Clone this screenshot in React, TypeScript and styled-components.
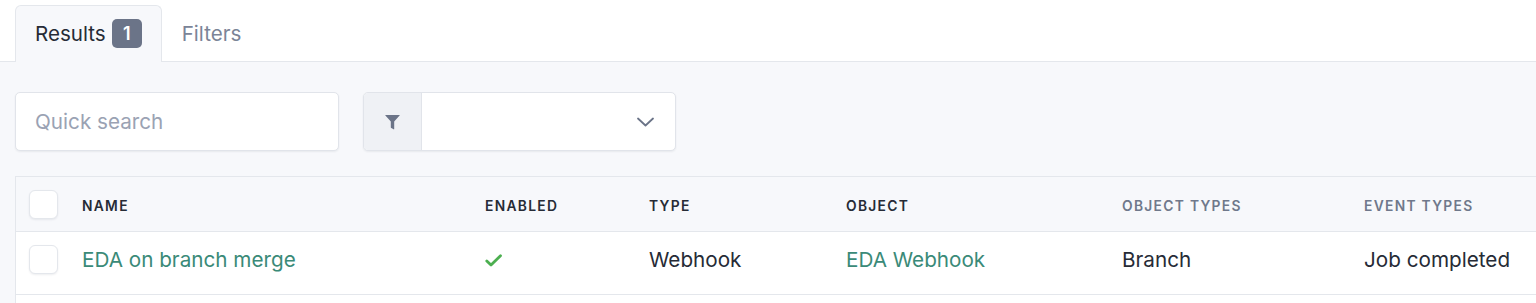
import React from "react";
import styled, { createGlobalStyle } from "styled-components";

const Global = createGlobalStyle`
  html, body { margin: 0; padding: 0; background: #f7f8fb; overflow: hidden; }
  body { font-family: Inter, "Noto Sans", "Liberation Sans", sans-serif; color: #1f2430; }
  * { box-sizing: border-box; }
`;

const Page = styled.div`
  width: 1536px;
  height: 303px;
  background: #f7f8fb;
`;

const TabBar = styled.div`
  display: flex;
  align-items: flex-end;
  height: 62px;
  padding: 5px 15px 0;
  background: #ffffff;
  border-bottom: 1px solid #e4e7ec;
`;

const Tab = styled.div<{ $active?: boolean }>`
  display: flex;
  align-items: center;
  gap: 6px;
  height: 57px;
  margin-bottom: -1px;
  padding: 0 19px 1px 19px;
  font-size: 20.6px;
  color: ${(p) => (p.$active ? "#262b36" : "#7b8497")};
  background: ${(p) => (p.$active ? "#f7f8fb" : "transparent")};
  border: 1px solid ${(p) => (p.$active ? "#e4e7ec" : "transparent")};
  border-bottom: none;
  border-radius: 6px 6px 0 0;
`;

const Badge = styled.span`
  display: inline-flex;
  align-items: center;
  justify-content: center;
  width: 30px;
  height: 29px;
  border-radius: 5px;
  background: #6b7488;
  color: #ffffff;
  font-size: 18px;
  font-weight: 600;
`;

const Toolbar = styled.div`
  display: flex;
  gap: 24px;
  padding: 30px 15px 0;
`;

const SearchBox = styled.div`
  display: flex;
  align-items: center;
  width: 324px;
  height: 59px;
  padding: 0 19px;
  background: #ffffff;
  border: 1px solid #e1e4ea;
  border-radius: 5px;
  box-shadow: 0 1px 2px rgba(30, 40, 60, 0.07);
  font-size: 20.7px;
  color: #9aa2b3;
`;

const FilterGroup = styled.div`
  display: flex;
  width: 313px;
  height: 59px;
  background: #ffffff;
  border: 1px solid #e1e4ea;
  border-radius: 5px;
  box-shadow: 0 1px 2px rgba(30, 40, 60, 0.07);
  overflow: hidden;
`;

const FilterIconCell = styled.div`
  display: flex;
  align-items: center;
  justify-content: center;
  width: 58px;
  background: #eff1f5;
  border-right: 1px solid #e1e4ea;
`;

const SelectCell = styled.div`
  flex: 1;
  display: flex;
  align-items: center;
  justify-content: flex-end;
  padding-right: 21px;
`;

const Table = styled.div`
  margin: 25px 0 0 15px;
  background: #ffffff;
  border: 1px solid #e4e7ec;
  border-right: none;
`;

const cols = "66px 403px 164px 197px 276px 242px 1fr";

const HeadRow = styled.div`
  display: grid;
  grid-template-columns: ${cols};
  align-items: center;
  height: 55px;
  background: #f7f8fb;
  border-bottom: 1px solid #e4e7ec;
`;

const BodyRow = styled.div`
  display: grid;
  grid-template-columns: ${cols};
  align-items: center;
  height: 63px;
  background: #ffffff;
  border-bottom: 1px solid #e4e7ec;
`;

const CheckCell = styled.div<{ $up?: number }>`
  padding-left: 13px;
  display: flex;
  align-items: center;
  padding-bottom: ${(p) => p.$up ?? 0}px;
`;

const Checkbox = styled.div`
  width: 29px;
  height: 29px;
  background: #ffffff;
  border: 1px solid #e4e7ec;
  border-radius: 6px;
  box-shadow: 0 1px 2px rgba(30, 40, 60, 0.08);
`;

const Th = styled.div<{ $muted?: boolean }>`
  font-size: 13.8px;
  font-weight: 600;
  letter-spacing: 1.3px;
  text-transform: uppercase;
  color: ${(p) => (p.$muted ? "#6f788b" : "#262b36")};
  padding-top: 3px;
`;

const Td = styled.div<{ $link?: boolean }>`
  font-size: 20.7px;
  color: ${(p) => (p.$link ? "#3a8a78" : "#262b36")};
  padding-bottom: 8px;
`;

const Filler = styled.div`
  height: 20px;
  background: #ffffff;
`;

const FunnelIcon = () => (
  <svg width="15" height="16" viewBox="0 0 15 16">
    <path d="M0.5 1 H14.5 Q15 1 14.6 1.6 L9.2 7.6 V15 Q9.2 15.6 8.6 15.3 L6.3 14 Q5.8 13.7 5.8 13.2 V7.6 L0.4 1.6 Q0 1 0.5 1 Z" fill="#6b7488" />
  </svg>
);

const Chevron = () => (
  <svg width="17" height="10" viewBox="0 0 17 10">
    <polyline points="1,1.5 8.5,8.5 16,1.5" fill="none" stroke="#6b7488" strokeWidth="1.8" strokeLinecap="round" strokeLinejoin="round" />
  </svg>
);

const Check = () => (
  <svg width="17" height="13" viewBox="0 0 17 13">
    <polyline points="1.8,7 6,11 15.5,1.8" fill="none" stroke="#4caf50" strokeWidth="2.8" strokeLinecap="round" strokeLinejoin="round" />
  </svg>
);

export default function App() {
  return (
    <Page>
      <Global />
      <TabBar>
        <Tab $active>
          Results <Badge>1</Badge>
        </Tab>
        <Tab>Filters</Tab>
      </TabBar>
      <Toolbar>
        <SearchBox>Quick search</SearchBox>
        <FilterGroup>
          <FilterIconCell>
            <FunnelIcon />
          </FilterIconCell>
          <SelectCell>
            <Chevron />
          </SelectCell>
        </FilterGroup>
      </Toolbar>
      <Table>
        <HeadRow>
          <CheckCell>
            <Checkbox />
          </CheckCell>
          <Th>Name</Th>
          <Th>Enabled</Th>
          <Th>Type</Th>
          <Th>Object</Th>
          <Th $muted>Object types</Th>
          <Th $muted>Event types</Th>
        </HeadRow>
        <BodyRow>
          <CheckCell $up={8}>
            <Checkbox />
          </CheckCell>
          <Td $link>EDA on branch merge</Td>
          <Td>
            <Check />
          </Td>
          <Td>Webhook</Td>
          <Td $link>EDA Webhook</Td>
          <Td>Branch</Td>
          <Td>Job completed</Td>
        </BodyRow>
        <Filler />
      </Table>
    </Page>
  );
}
